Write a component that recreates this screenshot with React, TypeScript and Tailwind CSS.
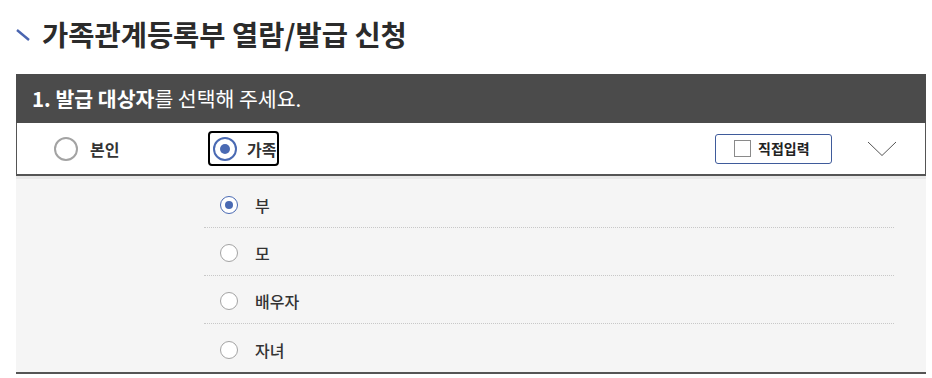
import { useState } from "react";

const FAMILY = ["부", "모", "배우자", "자녀"];

function Radio({ checked, size }: { checked: boolean; size: "lg" | "sm" }) {
  const outer =
    size === "lg" ? "w-[24px] h-[24px] border-2" : "w-[18px] h-[18px] border-[1.5px]";
  const dot = size === "lg" ? "w-[10px] h-[10px]" : "w-[8px] h-[8px]";
  return (
    <span
      className={`${outer} shrink-0 rounded-full bg-white flex items-center justify-center ${
        checked ? "border-[#4a6ab3]" : "border-[#a3a3a3]"
      }`}
    >
      {checked && <span className={`${dot} rounded-full bg-[#4a6ab3]`} />}
    </span>
  );
}

export default function App() {
  const [target, setTarget] = useState<"self" | "family">("family");
  const [member, setMember] = useState("부");
  const [direct, setDirect] = useState(false);

  return (
    <div
      className="w-[932px] h-[378px] bg-white overflow-hidden text-[#333]"
      style={{ fontFamily: '"Noto Sans CJK KR", "Noto Sans", sans-serif' }}
    >
      <div className="h-[74px] flex items-center pl-[16px] pb-[6px]">
        <svg width="14" height="12" viewBox="0 0 14 12" className="mt-[2px]">
          <line x1="1" y1="1" x2="13" y2="11" stroke="#4a65b0" strokeWidth="2.4" />
        </svg>
        <h1 className="ml-[12px] text-[28.5px] font-bold leading-none text-[#2b2b2b]">
          가족관계등록부 열람/발급 신청
        </h1>
      </div>

      <div className="ml-[16px] w-[910px]">
        <div className="h-[49px] bg-[#4b4b4b] flex items-center pl-[16px] text-white text-[20.5px]">
          <span className="font-bold">1. 발급 대상자</span>
          <span>를 선택해 주세요.</span>
        </div>

        <div className="h-[53px] bg-white border-x border-b-2 border-[#555] flex items-center pl-[37px] pr-[28px]">
          <button
            type="button"
            onClick={() => setTarget("self")}
            className="w-[154px] flex items-center gap-[12px] text-[16px] font-bold"
          >
            <Radio checked={target === "self"} size="lg" />
            본인
          </button>
          <button
            type="button"
            onClick={() => setTarget("family")}
            className={`h-[35px] flex items-center gap-[10px] pl-[3px] pr-[1px] rounded-[4px] border-2 text-[16px] font-bold ${
              target === "family" ? "border-black" : "border-transparent"
            }`}
          >
            <Radio checked={target === "family"} size="lg" />
            가족
          </button>

          <button
            type="button"
            onClick={() => setDirect(!direct)}
            className="ml-auto h-[30px] w-[117px] border border-[#3f5b9b] rounded-[3px] flex items-center pl-[18px] gap-[7px] text-[14px] font-bold text-[#222]"
          >
            <span className="w-[17px] h-[17px] border border-[#8a8a8a] bg-white flex items-center justify-center text-[11px] leading-none">
              {direct ? "✓" : ""}
            </span>
            직접입력
          </button>
          <svg width="30" height="16" viewBox="0 0 30 16" className="ml-[35px]">
            <polyline points="1,1 15,14.5 29,1" fill="none" stroke="#555" strokeWidth="1" />
          </svg>
        </div>

        <div className="bg-[#f5f5f5] border-t-[3px] border-[#e8e8e8] border-b-2 border-b-[#555] pl-[188px] pr-[32px]">
          {FAMILY.map((m, i) => (
            <button
              type="button"
              key={m}
              onClick={() => setMember(m)}
              className={`w-full flex items-center pl-[16px] pt-[3px] gap-[17px] text-[16px] font-medium text-[#333] ${
                i < FAMILY.length - 1 ? "border-b border-dotted border-[#c8c8c8]" : ""
              } ${i === 0 ? "h-[49px]" : "h-[48px]"}`}
            >
              <Radio checked={member === m} size="sm" />
              {m}
            </button>
          ))}
        </div>
      </div>
    </div>
  );
}
